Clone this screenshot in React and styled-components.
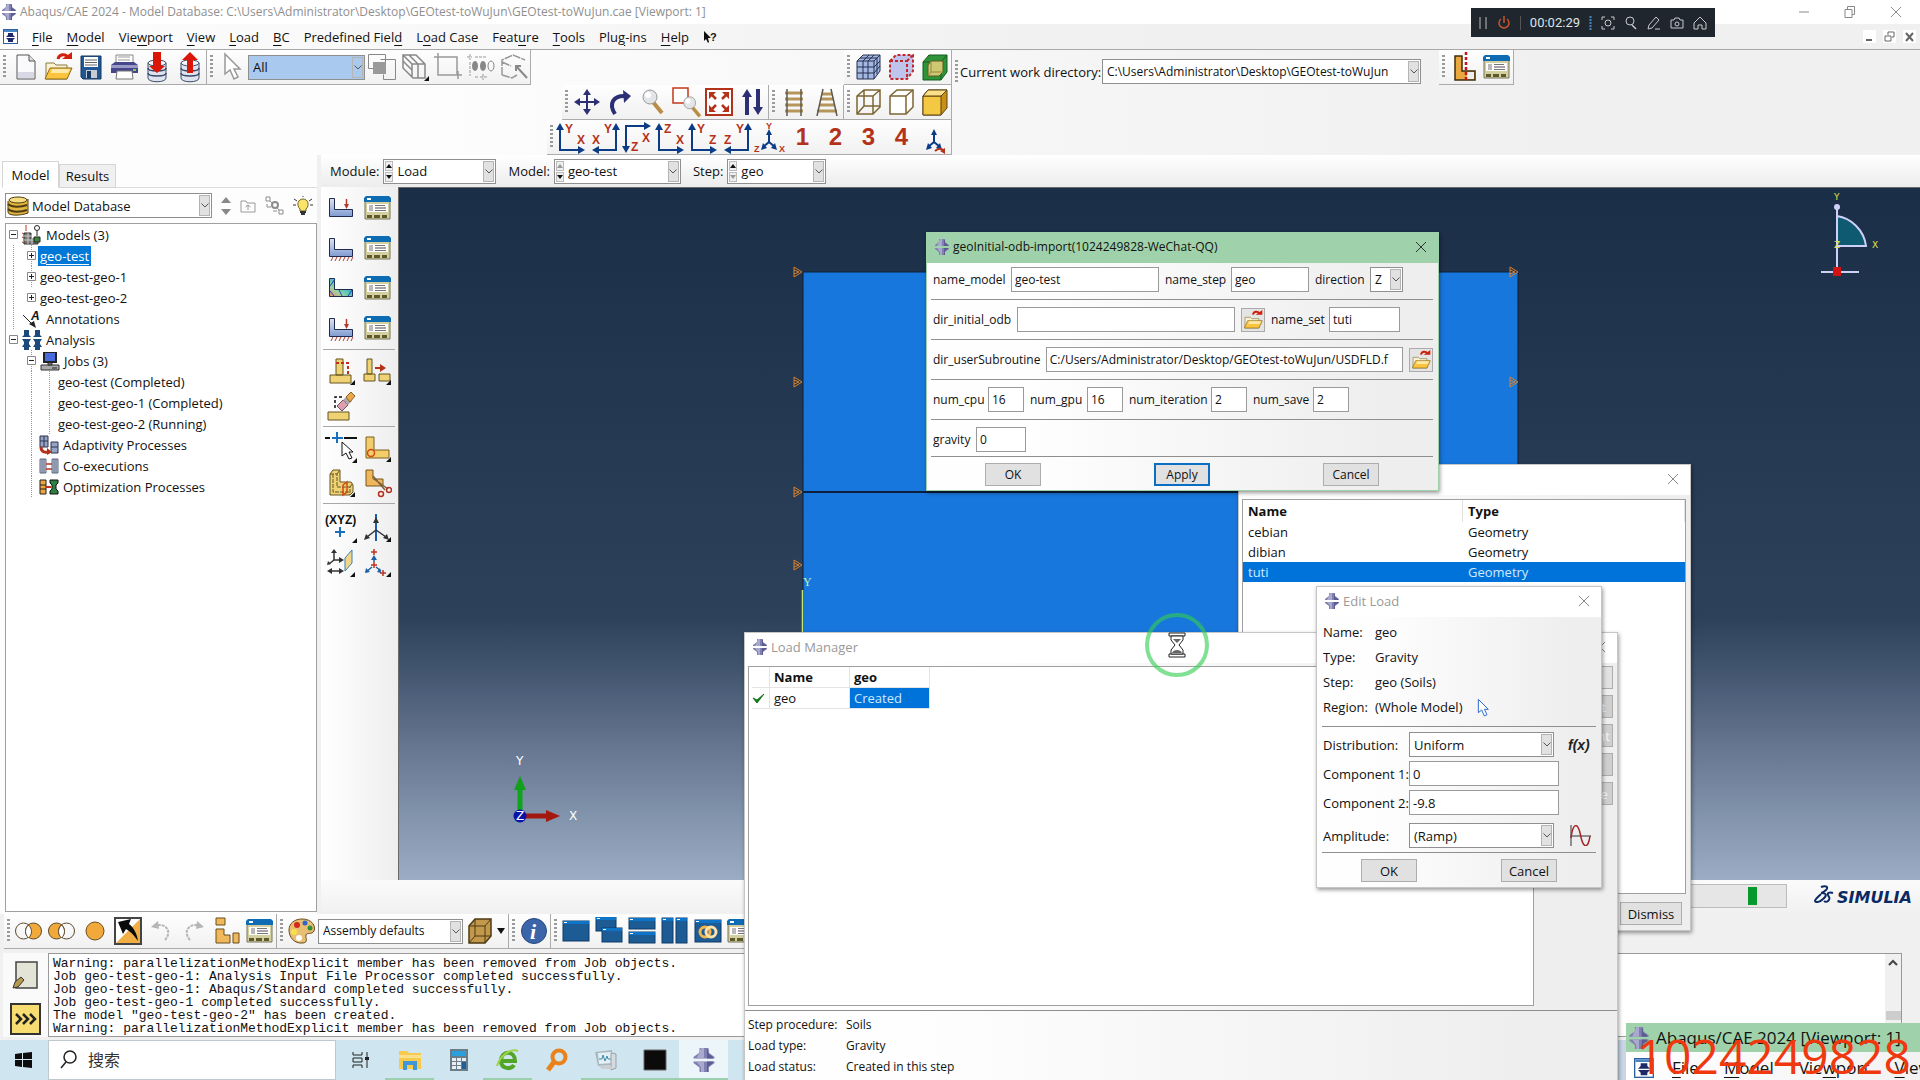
import React from 'react'
import styled, { createGlobalStyle } from 'styled-components';

const GlobalStyle = createGlobalStyle`
  * { box-sizing: border-box; }
  body {
    margin: 0;
    background: #f0f0f0;
    color: #111;
    font-family: "Open Sans", "Noto Sans", "Noto Sans CJK SC", sans-serif;
    font-size: 13px;
    line-height: 20px;
  }
  button, input, select { font: inherit; color: inherit; margin: 0; }
  svg { display: block; flex: none; }
`;

/* ---------- layout ---------- */

const Desktop = styled.div`
  position: relative;
  display: flex;
  flex-direction: column;
  height: 100vh;
  overflow: hidden;
`;

const TitleBar = styled.header`
  display: flex;
  align-items: center;
  gap: 3px;
  height: 24px;
  padding: 0 18px 0 1px;
  background: #fff;
  color: #8f8f8f;
  font-size: 12px;
`;

const WindowButtons = styled.div`
  display: flex;
  gap: ${(p) => p.$gap}px;
  margin-left: auto;
`;

const BareButton = styled.button`
  display: flex;
  align-items: center;
  justify-content: center;
  padding: 0;
  border: 0;
  background: ${(p) => p.$bg || 'transparent'};
  color: inherit;
`;

const MenuBar = styled.nav`
  display: flex;
  align-items: center;
  gap: 14px;
  height: 26px;
  padding: 0 4px 0 3px;
  background: linear-gradient(90deg, #fdfdfd, #f0f0f0 60%);
  border-bottom: 1px solid #a8a8a8;
`;

const MenuItem = styled.button`
  padding: 0;
  border: 0;
  background: none;
  white-space: nowrap;
  u { text-underline-offset: 3px; }
`;

const Dock = styled.div`
  display: flex;
  align-items: flex-start;
  background: linear-gradient(90deg, #fdfdfd 20%, #f0f0f0 80%);
`;

const DockColumn = styled.div`
  display: flex;
  flex-direction: column;
  width: 952px;
`;

const DockRow = styled.div`
  display: flex;
  justify-content: ${(p) => (p.$spread ? 'space-between' : 'flex-end')};
`;

const DockGroups = styled.div`
  display: flex;
`;

const Toolbar = styled.div`
  display: flex;
  align-items: center;
  height: 35px;
  border: solid #ababab;
  border-width: 0 1px 1px 0;
  background: linear-gradient(#fefefe, #f1f1f1);
`;

const Grip = styled.div`
  width: 3px;
  height: 24px;
  margin: 0 2px 0 3px;
  background: repeating-linear-gradient(#9a9a9a 0 2px, transparent 2px 4px);
`;

const ToolButton = styled.button`
  display: flex;
  align-items: center;
  justify-content: center;
  width: 33px;
  height: 33px;
  padding: 0;
  border: 0;
  background: none;
`;

const WorkDir = styled.div`
  display: flex;
  align-items: center;
  height: 35px;
  margin: 4px 18px 0 0;
  label { width: 142px; white-space: nowrap; }
`;

const Workspace = styled.main`
  display: flex;
  flex: 1;
  min-height: 0;
`;

const LeftPanel = styled.aside`
  display: flex;
  flex-direction: column;
  width: 317px;
  padding: 6px 0 2px 2px;
  background: #fdfdfd;
`;

const TabStrip = styled.div`
  display: flex;
  align-items: flex-end;
  border-bottom: 1px solid #dcdcdc;
`;

const Tab = styled.button`
  height: ${(p) => (p.$active ? 27 : 24)}px;
  width: 57px;
  margin-bottom: -1px;
  padding: 0;
  border: 1px solid #d5d5d5;
  border-bottom-color: ${(p) => (p.$active ? '#fff' : '#d5d5d5')};
  background: ${(p) => (p.$active ? '#fff' : '#f0f0f0')};
`;

const TreeTools = styled.div`
  display: flex;
  align-items: center;
  gap: 9px;
  padding: 5px 0 5px 3px;
`;

const Tree = styled.ul`
  flex: 1;
  margin: 0 0 0 3px;
  padding: 0;
  border: 1px solid #a0a0a0;
  background: #fff;
  list-style: none;
`;

const guides = (list) =>
  list.map((x) =>
    `repeating-linear-gradient(#999 0 1px, transparent 1px 2px) ${x}px 0 / 1px 100% no-repeat`
  ).join(', ') || 'none';

const TreeRow = styled.li`
  display: flex;
  align-items: center;
  height: 21px;
  gap: 4px;
  padding-left: ${(p) => p.$indent}px;
  background: ${(p) => guides(p.$guides)};
`;

const Toggle = styled.button`
  display: flex;
  padding: 0;
  border: 0;
  background: #fff;
`;

const TreeLabel = styled.span`
  padding: 0 2px;
  margin-left: -2px;
  background: ${(p) => (p.$selected ? '#0078d7' : 'none')};
  color: ${(p) => (p.$selected ? '#fff' : 'inherit')};
  text-decoration: ${(p) => (p.$selected ? 'underline' : 'none')};
  text-underline-offset: 3px;
`;

const CanvasColumn = styled.section`
  display: flex;
  flex: 1;
  flex-direction: column;
  min-width: 0;
  margin-left: 4px;
`;

const ContextBar = styled.div`
  display: flex;
  align-items: center;
  height: 32px;
  padding-left: 9px;
  background: linear-gradient(#fff, #ececec);
`;

const ContextField = styled.div`
  display: flex;
  align-items: center;
  gap: 4px;
  margin-right: 12px;
`;

const CanvasRow = styled.div`
  display: flex;
  flex: 1;
  min-height: 0;
`;

const Toolbox = styled.div`
  width: 77px;
  padding: 0 3px 0 2px;
  background: linear-gradient(90deg, #fff, #eee);
`;

const ToolSection = styled.div`
  display: grid;
  grid-template-columns: 36px 36px;
  grid-auto-rows: ${(p) => p.$row}px;
  padding: ${(p) => p.$pad}px 0;
  border-bottom: ${(p) => (p.$last ? 0 : 1)}px solid #a8a8a8;
  place-items: center;
`;

const Viewport = styled.div`
  flex: 1;
  background: linear-gradient(#1a2e47 0%, #2d415b 62%, #435670 70%, #64738e 80%, #8091aa 90%, #9badc4 100%);
  border: solid #6a6a6a;
  border-width: 1px 0 0 1px;
`;

const PromptArea = styled.div`
  display: flex;
  align-items: flex-start;
  justify-content: flex-end;
  height: 34px;
  padding: 4px 4px 0 0;
  background: linear-gradient(#fbfbfb, #f0f0f0);
`;

const ProgressTrack = styled.div`
  display: flex;
  justify-content: flex-end;
  width: 240px;
  height: 24px;
  margin-right: 25px;
  padding: 2px 29px 2px 0;
  border: 1px solid #bcbcbc;
  background: #e6e6e6;
`;

const ProgressBlock = styled.div`
  width: 9px;
  background: #069a2e;
`;

const BottomBar = styled.div`
  display: flex;
  padding: 0 4px 4px;
  background: #f0f0f0;
`;

const MessageArea = styled.div`
  display: flex;
  height: 87px;
  padding: 0 18px 3px 3px;
`;

const SideTabs = styled.div`
  display: flex;
  flex-direction: column;
  width: 45px;
  justify-content: space-between;
  align-items: center;
  padding: 6px 0 2px;
  background: #fafafa;
`;

const Log = styled.div`
  flex: 1;
  padding: 3px 4px 0;
  border: 1px solid #999;
  border-right: 0;
  background: #fff;
  font-family: "Liberation Mono", monospace;
  font-size: 13px;
  line-height: 13px;
  white-space: pre;
`;

const ScrollBar = styled.div`
  display: flex;
  flex-direction: column;
  justify-content: space-between;
  align-items: center;
  width: 17px;
  padding: 5px 0 16px;
  border: 1px solid #999;
  border-left: 0;
  background: #f0f0f0;
`;

const ScrollThumb = styled.div`
  width: 15px;
  height: 9px;
  background: #cdcdcd;
`;

const Taskbar = styled.footer`
  display: flex;
  height: 40px;
  background: linear-gradient(90deg, #cfe5ef 60%, #c9d5e5 85%);
`;

const StartButton = styled.button`
  display: flex;
  align-items: center;
  justify-content: center;
  width: 48px;
  padding: 0;
  border: 0;
  background: none;
`;

const SearchBox = styled.label`
  display: flex;
  align-items: center;
  gap: 11px;
  width: 288px;
  padding-left: 11px;
  border: 1px solid #bfc8cc;
  background: #fff;
  input {
    width: 200px;
    border: 0;
    padding: 0;
    outline: 0;
    font-size: 16px;
    &::placeholder { color: #333; opacity: 1; }
  }
`;

const TaskButton = styled.button`
  display: flex;
  align-items: center;
  justify-content: center;
  width: 49px;
  padding: 0;
  border: 0;
  background: ${(p) => (p.$active ? '#ecf6fa' : 'none')};
  box-shadow: ${(p) => (p.$running ? 'inset 0 -2px #9ccfae' : 'none')};
`;

/* ---------- form parts ---------- */

const ComboBox = styled.div`
  display: flex;
  flex: none;
  align-items: center;
  width: ${(p) => p.$w}px;
  height: 25px;
  padding: 1px;
  border: 1px solid #8f8f8f;
  background: ${(p) => p.$bg || '#fff'};
  font-size: ${(p) => p.$font || 13}px;
  select {
    flex: 1;
    min-width: 0;
    height: 100%;
    padding: 0 0 0 3px;
    border: 0;
    outline: 0;
    appearance: none;
    background: transparent;
  }
`;

const ComboArrow = styled.span`
  display: flex;
  align-items: center;
  justify-content: center;
  width: 11px;
  height: 100%;
  border: 1px solid #b4b4b4;
  background: ${(p) => (p.$flat ? 'transparent' : '#e1e1e1')};
`;

const Spinner = styled.span`
  display: flex;
  flex-direction: column;
  gap: 1px;
  padding-right: 1px;
`;

const SpinButton = styled.button`
  display: flex;
  align-items: center;
  justify-content: center;
  width: 8px;
  height: 10px;
  padding: 0;
  border: 1px solid #bbb;
  background: #eee;
`;

const TextInput = styled.input`
  width: ${(p) => p.$w}px;
  height: 25px;
  padding: 0 3px;
  border: 1px solid #9a9a9a;
  outline: 0;
  background: #fff;
`;

const PushButton = styled.button`
  width: ${(p) => p.$w || 56}px;
  height: 23px;
  padding: 0;
  border: ${(p) => (p.$focus ? '2px solid #0a6fc2' : '1px solid #adadad')};
  background: ${(p) => (p.$off ? '#cfcfcf' : '#e1e1e1')};
  color: ${(p) => (p.$off ? '#f5f5f5' : 'inherit')};
  line-height: 18px;
  white-space: nowrap;
`;

const Rule = styled.hr`
  margin: 0;
  border: 0;
  border-top: 1px solid #8f8f8f;
`;

/* ---------- dialogs ---------- */

const Dialog = styled.section`
  position: absolute;
  left: ${(p) => p.$x}px;
  top: ${(p) => p.$y}px;
  width: ${(p) => p.$w}px;
  border: 1px solid ${(p) => p.$edge || '#c6c6c6'};
  background: linear-gradient(90deg, #fefefe 20%, #eee 90%);
  box-shadow: 1px 2px 4px rgba(0, 0, 0, 0.4);
  font-size: ${(p) => p.$font || 13}px;
`;

const DialogTitle = styled.div`
  display: flex;
  align-items: center;
  gap: 3px;
  height: 30px;
  padding: 0 11px 2px 7px;
  background: ${(p) => (p.$active ? '#9fd2aa' : '#fff')};
  color: ${(p) => (p.$active ? '#111' : '#999')};
  button { margin-left: auto; }
`;

const GeoBody = styled.form`
  padding: 4px 5px 4px 4px;
`;

const GeoRow = styled.div`
  display: flex;
  align-items: center;
  height: 25px;
  margin: ${(p) => (p.$first ? 0 : 7)}px 0 ${(p) => (p.$last ? 4 : 7)}px 2px;
`;

const GeoLabel = styled.label`
  width: ${(p) => p.$w}px;
  white-space: nowrap;
`;

const Spacer = styled.span`
  width: ${(p) => p.$w}px;
`;

const FileButton = styled.button`
  display: flex;
  align-items: center;
  justify-content: center;
  width: 24px;
  height: 24px;
  padding: 0;
  border: 1px solid #aaa;
  background: #e4e4e4;
`;

const ButtonRow = styled.div`
  display: flex;
  justify-content: ${(p) => (p.$end ? 'flex-end' : 'space-between')};
  padding: ${(p) => (p.$end ? 8 : 6)}px ${(p) => p.$side}px 0;
`;

const SetBody = styled.div`
  padding: 4px 4px 5px 3px;
`;

const ListFrame = styled.div`
  height: ${(p) => p.$h}px;
  border: 1px solid #a0a0a0;
  background: #fff;
`;

const SetTable = styled.table`
  width: 100%;
  border-spacing: 0;
  table-layout: fixed;
  text-align: left;
  th, td { height: 20px; padding: 0 5px; }
  thead th { height: 22px; border-right: 1px solid #e2e2e2; }
  tbody tr:last-child { background: #0073db; color: #cfeaff; }
  col:first-child { width: 220px; }
`;

const LoadBody = styled.div`
  display: flex;
  padding: 3px 4px 4px 3px;
  ${ListFrame} { flex: 1; margin-right: 5px; }
`;

const LoadTable = styled.table`
  margin: 0 0 0 3px;
  border-spacing: 0;
  text-align: left;
  th, td { height: 20px; padding: 0 4px; border: solid #e4e4e4; border-width: 0 1px 1px 0; }
  th:first-child, td:first-child { width: 18px; padding: 0; }
  th, td { width: 80px; }
  td:last-child { background: #0073db; color: #cfeaff; }
`;

const SideButtons = styled.div`
  display: flex;
  flex-direction: column;
  gap: 6px;
`;

const LoadInfo = styled.dl`
  display: grid;
  grid-template-columns: 98px 1fr;
  margin: 3px 3px 4px;
  font-size: 12px;
  line-height: 21px;
  dd { margin: 0; }
`;

const EditBody = styled.form`
  padding: 3px 5px 5px;
`;

const Facts = styled.dl`
  display: grid;
  grid-template-columns: 52px 1fr;
  margin: 0 1px 6px;
  line-height: 25px;
  dd { display: flex; align-items: center; gap: 14px; margin: 0; }
`;

const EditField = styled.div`
  display: flex;
  align-items: center;
  height: 25px;
  margin: ${(p) => p.$gap}px 0 4px 1px;
  label { width: 86px; white-space: nowrap; }
`;

const FieldButton = styled(BareButton)`
  width: 24px;
  margin-left: 14px;
`;

const Preview = styled.section`
  position: absolute;
  right: 0;
  bottom: 0;
  width: 294px;
  overflow: hidden;
  background: linear-gradient(90deg, #fff, #f2f2f2);
  font-size: 17px;
  white-space: nowrap;
`;

const PreviewTitle = styled.div`
  display: flex;
  align-items: center;
  gap: 6px;
  height: 29px;
  padding-left: 2px;
  background: #9fd2aa;
`;

const PreviewMenu = styled.div`
  display: flex;
  align-items: center;
  gap: 25px;
  height: 28px;
  padding: 4px 0 0 8px;
  svg { margin-right: -7px; }
  u { text-underline-offset: 3px; }
`;

const Stamp = styled.div`
  position: absolute;
  right: 9px;
  bottom: 0;
  color: #f0380f;
  font-size: 48px;
  line-height: 48px;
`;

const ClickRing = styled.div`
  position: absolute;
  left: 1145px;
  top: 613px;
  display: flex;
  align-items: center;
  justify-content: center;
  width: 64px;
  height: 64px;
  border: 4px solid rgba(50, 205, 80, 0.62);
  border-radius: 50%;
`;

const Recorder = styled.div`
  position: absolute;
  right: 205px;
  top: 8px;
  display: flex;
  align-items: center;
  gap: 9px;
  height: 29px;
  padding: 0 8px 0 7px;
  background: #20262e;
  color: #dfe3e6;
  font-family: Roboto, sans-serif;
  font-size: 13px;
`;

const Digit = styled.span`
  color: #b5321a;
  font: bold 24px "Liberation Sans", sans-serif;
`;

/* ---------- drawings ---------- */

const Svg = ({ s = 28, w, h, children }) => (
  <svg width={w || s} height={h || s} viewBox={`0 0 ${w || s} ${h || s}`} fill="none" aria-hidden="true">{children}</svg>
);

const AbaqusMark = ({ size = 16 }) => (
  <svg width={size} height={size} viewBox="0 0 16 16" aria-hidden="true">
    <path d="M5 0h6v3l4 3v1H1V6l4-3zM1 9h14v1l-4 3v3H5v-3l-4-3z" fill="#7f7fb0" />
    <path d="M6 0h2v7H3zM3 9h5v7H6v-3z" fill="#a9a9cd" />
    <path d="M10 1h1v3l3 2v1h-4zM10 9h4v1l-3 2v4h-1z" fill="#5c5c92" />
  </svg>
);

const DocMark = ({ size = 15 }) => (
  <svg width={size} height={size} viewBox="0 0 15 15" aria-hidden="true">
    <rect x=".5" y=".5" width="14" height="14" fill="#fff" stroke="#2e5f9e" />
    <path d="M1 1h13v2H1z" fill="#4b86c4" />
    <path d="M5 4h5v2l2 2H3l2-2zM3 9h9l-2 2v2H5v-2z" fill="#1c2a6a" />
  </svg>
);

const Cross = ({ c = '#8a8a8a' }) => <Svg s={12}><path d="M1 1l10 10M11 1L1 11" stroke={c} /></Svg>;
const Chevron = ({ c = '#555' }) => <Svg w={8} h={5}><path d="M.5.5L4 4 7.500.5" stroke={c} /></Svg>;
const Corner = () => <path d="M28 23v5h-5z" fill="#111" />;

const NewIcon = () => <Svg s={30}><path d="M7 3h12l6 6v18H7z" fill="#fafafc" stroke="#555" /><path d="M19 3v6h6" fill="#ddd" stroke="#555" /><path d="M8 20h16v6H8z" fill="#d9d9e6" /></Svg>;
const OpenIcon = ({ s = 30 }) => (
  <svg width={s} height={s} viewBox="0 0 30 30" fill="none" aria-hidden="true">
    <path d="M3 27V11h8l2 2h11v14z" fill="#fbf2d2" stroke="#8a7a45" />
    <path d="M2 27l5-11h22l-5 11z" fill="#fbc43c" stroke="#8a6a20" />
    <path d="M9 17h18l-2 4H8z" fill="#fde9a8" />
    <path d="M15 7c1-5 8-6 10-1" stroke="#d0210c" strokeWidth="3" /><path d="M19 7h10V0z" fill="#d0210c" />
  </svg>
);
const SaveIcon = () => <Svg><path d="M4 3h20v23H6l-2-2z" fill="#1f5796" stroke="#16365f" /><path d="M7 4h14v10H7z" fill="#fff" /><path d="M8 7h12M8 9.500h12M8 12h12" stroke="#666" /><path d="M9 17h11v8H9z" fill="#c7ccd2" /><path d="M10 18h4v7h-4z" fill="#173a66" /></Svg>;
const PrintIcon = () => <Svg s={30}><path d="M7 3h17v10H7z" fill="#fff" stroke="#888" /><path d="M9 5h12M9 8h12" stroke="#999" /><path d="M2 13l4-3h19l4 3v8H2z" fill="#46468a" /><path d="M2 13h27v3H2z" fill="#9a9ac9" /><path d="M8 19h15l1 8H7z" fill="#fff" stroke="#777" /><path d="M24 18h3" stroke="#7fd24e" strokeWidth="2" /></Svg>;
const DbIcon = ({ up }) => (
  <Svg s={32}>
    <path d="M7 12v15c0 5 18 5 18 0V12" fill="#dde4f0" stroke="#3c4a66" />
    <ellipse cx="16" cy="12" rx="9" ry="3" fill="#f5f7fb" stroke="#3c4a66" />
    <path d="M7 17c0 4 18 4 18 0M7 22c0 4 18 4 18 0" stroke="#3c4a66" strokeWidth="1.500" />
    <path d={up ? 'M13 22V9H8l8-8 8 8h-5v13z' : 'M12 1h8v14h4l-8 7-8-7h4z'} fill="#d91608" />
  </Svg>
);
const ArrowCursor = ({ c = '#999', w = 20, h = 30 }) => (
  <svg width={w} height={h} viewBox="0 0 20 30" fill="#fff" stroke={c} strokeWidth="1.500" aria-hidden="true"><path d="M3 2v20l5-4 4 9 4-2-4-8h6z" /></svg>
);
const OverlapIcon = () => <Svg s={30}><path d="M1.500 2.500h17v14h-17z" stroke="#888" /><path d="M13.500 7.500h15v20h-12v-5" stroke="#888" /><path d="M6 10h13v12H6z" fill="#999" /></Svg>;
const GreyCube = () => <Svg><path d="M2 2h13l9 9v14H12L2 15zM2 2l9 9h13M11 11v13M2 8l9 9M8 2l9 9v14" stroke="#888" strokeWidth="1.500" /><Corner /></Svg>;
const GreyFrame = () => <Svg><path d="M4 4h19v18H4zM0 4h5M4 0v8M21 22h7M24 18v8" stroke="#999" strokeWidth="1.500" /></Svg>;
const GreyDots = () => <Svg><path d="M0 4h5M3 1v6M8 4h12M3 9v14M8 24h4M16 21v6M13 24h8" stroke="#999" strokeDasharray="3 1" /><ellipse cx="8" cy="13" rx="3" ry="5" fill="#888" /><ellipse cx="16" cy="13" rx="3" ry="5" fill="#888" /><ellipse cx="24" cy="13" rx="3" ry="5" stroke="#888" /></Svg>;
const GreyShell = () => <Svg><path d="M2 22V7l11-5 12 5M2 9l9 4M2 22l10 3 5-3" stroke="#999" strokeWidth="1.500" strokeDasharray="8 1" /><path d="M27 25L17 14M16 18v-5h5" stroke="#888" strokeWidth="2" /></Svg>;

const MeshCube = () => <Svg><path d="M2 8l6-6h17v16l-6 8H2z" fill="#a5b7e3" stroke="#22304f" /><path d="M2 8h17v18M19 8l6-6M8 8v18M13 8v18M2 14h17l6-6M2 20h17l6-7M5 5h17v16M8 8l6-6M13 8l6-6" stroke="#22304f" /></Svg>;
const SeedCube = () => <Svg><path d="M2 8l6-6h17v16l-6 8H2z" fill="#bfc4ec" stroke="#c2272b" strokeWidth="2" strokeDasharray="3 2" /><path d="M2 8h17v18M19 8l6-6" stroke="#c2272b" strokeWidth="2" strokeDasharray="3 2" /></Svg>;
const NestedCube = () => <Svg><path d="M2 9l6-7h18v17l-6 8H2z" fill="#2f9439" stroke="#175a20" /><path d="M2 9h18v18M20 9l6-7" stroke="#175a20" /><path d="M7 12l3-4h12v11l-4 4H7z" fill="#cfc873" stroke="#5b5a20" /><path d="M10 8v11h12M10 19l-3 4" stroke="#8c8a3c" /></Svg>;
const MoveIcon = () => <Svg><path d="M14 4v20M4 14h20" stroke="#2c2f74" strokeWidth="2" /><path d="M14 1l4 6h-8zM14 27l4-6h-8zM1 14l6-4v8zM27 14l-6-4v8z" fill="#2c2f74" /></Svg>;
const RotateIcon = () => <Svg><path d="M9 26C2 15 8 8 18 8" stroke="#2c2f74" strokeWidth="4" /><path d="M17 2l8 6-7 7z" fill="#2c2f74" /></Svg>;
const Lens = ({ x = 0, y = 0 }) => <g transform={`translate(${x} ${y})`}><path d="M12 13l9 11" stroke="#b98d46" strokeWidth="4" /><circle cx="9" cy="8" r="7" fill="#e4e5e8" stroke="#999" /><circle cx="7" cy="6" r="3" fill="#fff" /></g>;
const ZoomIcon = () => <Svg><Lens x={2} y={1} /></Svg>;
const BoxZoomIcon = () => <Svg s={32}><path d="M3 2h15v15H3z" fill="#fff" stroke="#c3361d" strokeWidth="1.500" /><g transform="translate(12 10) scale(.85)"><Lens /></g></Svg>;
const FitIcon = () => <Svg><path d="M1 1h26v26H1z" fill="#fff" stroke="#b5321a" strokeWidth="2" /><path d="M4 4h7L4 11zM24 4h-7l7 7zM4 24h7l-7-7zM24 24h-7l7-7z" fill="#b5321a" /><path d="M5 5l6 6M23 5l-6 6M5 23l6-6M23 23l-6-6" stroke="#b5321a" strokeWidth="2.500" /></Svg>;
const UpDownIcon = () => <Svg><path d="M9 27V7M20 1v19" stroke="#2c2f74" strokeWidth="4" /><path d="M9 1l5 8H4zM20 27l5-8H15z" fill="#2c2f74" /></Svg>;
const LadderIcon = ({ slant }) => <Svg><path d={slant ? 'M9 6h10M8 11h12M6 17h16M4 23h20' : 'M5 5h18M5 11h18M5 17h18M5 23h18'} stroke="#b6955a" strokeWidth="3" /><path d={slant ? 'M10 1L4 28M18 1l6 27' : 'M7 1v27M21 1v27'} stroke="#5d5850" strokeWidth="1.500" /></Svg>;
const WireCube = () => <Svg><path d="M2 8l7-6h16v17l-7 7H2zM2 8h16v18M18 8l7-6M9 2v16h16M9 18l-7 8" stroke="#7c6633" strokeWidth="1.500" /></Svg>;
const HiddenCube = () => <Svg><path d="M2 8l7-6h16v17l-7 7H2z" fill="#fff" stroke="#7c6633" strokeWidth="1.500" /><path d="M2 8h16v18M18 8l7-6" stroke="#7c6633" strokeWidth="1.500" /></Svg>;
const SolidCube = () => <Svg><path d="M2 8l5-6h19v18l-6 7H2z" fill="#c98f16" stroke="#5c4310" /><path d="M2 8h18v19H2z" fill="#f5c843" stroke="#5c4310" /><path d="M2 8l5-6h19l-6 6z" fill="#fbe08a" stroke="#5c4310" /></Svg>;

const Letter = ({ x, y, children, c = '#b5321a', size = 12 }) => (
  <text x={x} y={y} fill={c} fontSize={size} fontWeight="bold" fontFamily="Liberation Sans, sans-serif">{children}</text>
);
const AxisIcon = ({ flip, v, h }) => (
  <Svg s={33}>
    <path d={flip ? 'M28 7v22H9' : 'M5 7v22h19'} stroke="#0c3c86" strokeWidth="2" />
    <path d={flip ? 'M28 2l4 7h-8zM4 29l7-4v8z' : 'M5 2l4 7H1zM30 29l-7-4v8z'} fill="#0c3c86" />
    <Letter x={flip ? 16 : 10} y={12}>{v}</Letter><Letter x={flip ? 4 : 22} y={23}>{h}</Letter>
  </Svg>
);
const AxisDown = () => <Svg s={33}><path d="M5 26V5h20" stroke="#0c3c86" strokeWidth="2" /><path d="M5 32l4-7H1zM30 5l-7-4v8z" fill="#0c3c86" /><Letter x={21} y={21}>X</Letter><Letter x={10} y={30}>Z</Letter></Svg>;
const IsoIcon = ({ custom }) => (
  <Svg s={33}>
    <path d="M16 10v11l-6 5M16 21l6 5" stroke="#0c3c86" strokeWidth="2" />
    <path d="M16 8l3 6h-6zM8 29l2-7 4 5zM24 29l-2-7-4 5z" fill="#0c3c86" />
    {custom
      ? <><path d="M17 30c3-3 7-3 9 0" stroke="#b5321a" strokeWidth="2" /><path d="M27 33v-6l-5 3z" fill="#b5321a" /></>
      : <><Letter x={13} y={8} size={9}>Y</Letter><Letter x={1} y={31} size={9}>Z</Letter><Letter x={26} y={31} size={9}>X</Letter></>}
  </Svg>
);
const PartIcon = () => <Svg s={30}><path d="M6 4h7v15h13v9H6z" fill="#e8a83e" stroke="#3c2c10" strokeWidth="1.500" /><path d="M18 20h7v7h-7z" fill="#eee" /><path d="M17 0v30" stroke="#c2161a" strokeWidth="2.500" strokeDasharray="3 2" /></Svg>;
const ManagerIcon = ({ w = 27 }) => (
  <svg width={w} height={w - 3} viewBox="0 0 27 24" aria-hidden="true">
    <path d="M1 2l1-1h23l1 1v21H1z" fill="#d3cf9f" stroke="#77745a" />
    <path d="M0 2l2-2h23l2 2v4H0z" fill="#0e6cb5" /><path d="M3 2h4v2H3z" fill="#fff" />
    <path d="M3 8h21v8H3z" fill="#fdfdfd" /><path d="M5 10h4M5 12h4M5 14h4M11 9.500h10M11 14.500h11" stroke="#777" /><path d="M11 11h11v2H11z" fill="#a9a2aa" />
    <path d="M3 19h5v3H3zM10 19h6v3h-6zM18 19h5v3h-5z" fill="#5f5a2b" />
  </svg>
);
const LoadIcon = ({ arrow, hatch, field }) => (
  <Svg>
    <defs>
      <linearGradient id="steel" x1="0" y1="0" x2="0" y2="1"><stop offset="0" stopColor="#dfe2f2" /><stop offset="1" stopColor="#7f9bd2" /></linearGradient>
      <linearGradient id="rainbow" x1="0" y1="1" x2="1" y2="0"><stop offset="0" stopColor="#e88d6a" /><stop offset=".3" stopColor="#9bd3a0" /><stop offset=".6" stopColor="#39c0c4" /><stop offset="1" stopColor="#3354c8" /></linearGradient>
    </defs>
    <path d="M2.500 4.500h5v11h18v7h-23z" fill={field ? 'url(#rainbow)' : 'url(#steel)'} stroke="#202a4e" />
    {arrow && <><path d="M19.500 5v8" stroke="#b93a2d" strokeWidth="1.500" /><path d="M17 10h5l-2.500 5z" fill="#b93a2d" /></>}
    {hatch && <path d="M6 23l-2 4M10 23l-2 4M14 23l-2 4M18 23l-2 4M22 23l-2 4M26 23l-2 4" stroke="#b93a2d" />}
    {field && <path d="M3 12l5-7M3 17l4 5M12 16l3 6M21 22l4-6" stroke="#2c3cc0" />}
  </Svg>
);
const yellow = { fill: '#efd274', stroke: '#655421' };
const TeeIcon = () => <Svg><path d="M9 2h7v16H9zM3 18h21v8H3z" {...yellow} /><path d="M9 6h12v12" stroke="#c2301c" strokeWidth="2" strokeDasharray="3 2" /><Corner /></Svg>;
const SplitIcon = () => <Svg><path d="M4 2h5v15H4zM1 17h11v7H1zM16 17h11v7H16z" {...yellow} /><path d="M12 11h6" stroke="#b5321a" strokeWidth="2" /><path d="M17 7l6 4-6 4z" fill="#b5321a" /><Corner /></Svg>;
const EraseIcon = () => <Svg s={30}><path d="M2 21h21v8H2z" {...yellow} /><path d="M16 6h-7v13" stroke="#111" strokeWidth="1.500" strokeDasharray="3 2" /><path d="M11 15l6-6 5 5-6 6z" fill="#dc9fb0" stroke="#764f5c" /><path d="M17 9l4-4 5 5-4 4z" fill="#a9a9a9" /><path d="M20 6l5-5 4 4-5 6z" fill="#eba84a" stroke="#8c642a" /></Svg>;
const PickEdge = () => <Svg s={32}><path d="M0 6h5M19 6h13" stroke="#111" strokeWidth="2" /><path d="M12 0v11M7 6h11" stroke="#1a6fbd" strokeWidth="2" /><path d="M17 10v14l4-3 3 6 3-1-3-6h4z" fill="#fff" stroke="#111" /><path d="M32 26v5h-5z" fill="#111" /></Svg>;
const PartitionL = () => <Svg><path d="M3 3h8v13h15v8H3z" fill="#f3cd6a" stroke="#7a5f22" /><circle cx="8" cy="19" r="3.500" stroke="#cf4a14" strokeWidth="1.500" /><Corner /></Svg>;
const PartitionSolid = () => <Svg><path d="M3 5l3-4h7v12h11l2 3v7l-3 3H3z" {...yellow} /><path d="M3 5h7v13h13v8M10 5l3-4M23 18l3-4M6 5v18h17" stroke="#655421" strokeDasharray="4 1" /><path d="M16 16l4-3v10l-4 3z" stroke="#cf4a14" strokeWidth="1.500" /><Corner /></Svg>;
const CutIcon = () => <Svg s={30}><path d="M4 2h7v9h10v7H4z" fill="#efb65b" stroke="#76571f" /><path d="M11 8l12 14M12 11l14 10" stroke="#7a6140" strokeWidth="1.500" /><circle cx="19" cy="26" r="2.500" stroke="#b3321f" strokeWidth="1.500" /><circle cx="27" cy="22" r="2.500" stroke="#b3321f" strokeWidth="1.500" /></Svg>;
const XyzIcon = () => <Svg s={32}><Letter x={0} y={12} c="#111" size={12}>(XYZ)</Letter><path d="M15 15v10M10 20h10" stroke="#1a6fbd" strokeWidth="2" /><path d="M32 26v5h-5z" fill="#111" /></Svg>;
const AxisTool = () => <Svg><path d="M13 0v27" stroke="#1a5fa8" strokeWidth="2" /><path d="M13 16L4 23M13 16l10 7" stroke="#333" strokeWidth="1.500" /><path d="M13 3l3 6h-6zM1 26l2-6 4 4zM26 26l-2-6-4 4z" fill="#333" /><Corner /></Svg>;
const PlaneTool = () => <Svg><path d="M7 3v8h8M7 11l-5 4M2 22h13" stroke="#333" strokeWidth="1.500" /><path d="M4 4l3-4 3 4zM12 8l5 3-5 3zM0 22l5-3v6zM17 22l-5-3v6zM0 16l1-4 3 3z" fill="#333" /><path d="M18 9l7-8v13l-7 8z" fill="#f2d78a" stroke="#3c7fb0" /><Corner /></Svg>;
const CsysTool = () => <Svg><path d="M11 0v6M8 3h6M11 13v6M8 16h6M20 21v6M17 24h6" stroke="#c2301c" strokeWidth="1.500" /><path d="M11 13V9M9 18l-6 5M13 18l5 4" stroke="#1a5fa8" strokeWidth="1.500" /><path d="M11 6l3 5H8zM2 24l1-5 4 4zM18 24l-1-5-3 4z" fill="#1a5fa8" /><Corner /></Svg>;

const DbStack = () => <Svg w={22} h={20}><path d="M1 5v11c0 4 12 4 20 1V3" fill="#e2b53e" stroke="#4d3c12" /><ellipse cx="11" cy="4" rx="9" ry="3" fill="#f6dc7e" stroke="#4d3c12" /><path d="M1 8c4 4 14 3 19 1M1 13c4 4 14 3 19 1" stroke="#4d3c12" strokeWidth="2" /></Svg>;
const SortArrows = () => <Svg w={10} h={20}><path d="M5 1l5 6H0zM5 19l5-6H0z" fill="#888" /></Svg>;
const FolderUp = () => <Svg w={16} h={16}><path d="M1 14V3h5l1 2h8v9zM8 12V7M5.500 9L8 7l2.500 2" stroke="#999" /></Svg>;
const LinkIcon = () => <Svg w={19} h={19}><path d="M1 1h4v4H1zM14 14h4v4h-4zM5 5l3 3M12 12l2 2M2 8v3h4M8 15h4" stroke="#8d8d8d" /><circle cx="10" cy="9" r="3" stroke="#8d8d8d" strokeWidth="2" /></Svg>;
const BulbIcon = () => <Svg s={20}><path d="M7 13c-4-4-2-10 3-10s7 6 3 10v2H7z" fill="#fbe268" stroke="#6d6427" /><path d="M7 16h6M8 18h4" stroke="#333" strokeWidth="2" /><path d="M1 3l3 2M19 3l-3 2M0 9h3M17 9h3M10 0v1" stroke="#333" /></Svg>;
const Box = ({ plus }) => <Svg s={9}><path d="M.5.5h8v8h-8z" fill="#fff" stroke="#888" /><path d={plus ? 'M2 4.500h5M4.500 2v5' : 'M2 4.500h5'} stroke="#222" /></Svg>;
const ModelsIcon = () => <Svg s={20}><path d="M2 8h7v6h7v5H2z" fill="#777" stroke="#333" /><path d="M2 11h8M2 15h12M6 8v11M10 13v6" stroke="#ccc" /><path d="M4 0v6M0 8l2 1M0 12l2 1M0 17l2 1" stroke="#c2301c" /><circle cx="15" cy="3" r="2.500" stroke="#222" /><path d="M15 6v5" stroke="#222" /><path d="M12 12h6v5h-6z" fill="#38863c" stroke="#222" /></Svg>;
const NoteIcon = () => <Svg s={20}><path d="M1 6l9 9" stroke="#222" /><path d="M7 15l5-3 2 7z" fill="#222" /><text x="9" y="11" fill="#111" fontSize="12" fontWeight="bold" fontStyle="italic" fontFamily="Liberation Sans, sans-serif">A</text></Svg>;
const AnalysisIcon = () => <Svg s={20}><path d="M2 0h5v5l2 2H0l2-2zM0 9h9l-2 3v2l2 3H7v3H2v-3H0l2-3v-2zM13 0h5v5l2 2h-9l2-2zM11 9h9l-2 3v2l2 3h-2v3h-5v-3h-2l2-3v-2z" fill="#1d4a7c" /></Svg>;
const JobIcon = () => <Svg s={20}><path d="M3 1h14v11H3z" fill="#222" /><path d="M5 2h10v8H5z" fill="#4a6ae0" /><path d="M8 12h4v2H8zM1 14h18v5H1z" fill="#aaa" stroke="#333" /><path d="M12 17h5" stroke="#222" /></Svg>;
const AdaptIcon = () => <Svg s={20}><path d="M1 1h8v11H1zM12 7h7v11h-7z" fill="#96a4c4" stroke="#2c3550" /><path d="M1 6h8M5 1v11M12 12h7" stroke="#2c3550" /><path d="M2 12c0 5 4 6 8 5" stroke="#b5321a" strokeWidth="3" /><path d="M8 13l5 4-5 3z" fill="#b5321a" /></Svg>;
const CoexecIcon = () => <Svg s={20}><path d="M1 3h6v14H1zM13 3h6v14h-6z" fill="#c1cbe0" stroke="#5d6880" /><path d="M3 3v14M5 3v14M15 3v14M17 3v14" stroke="#5d6880" /><path d="M7 8h6M7 13h6" stroke="#c2301c" strokeWidth="1.500" /></Svg>;
const OptIcon = () => <Svg s={20}><path d="M1 3h6v14H1z" fill="#eda73d" stroke="#222" /><path d="M1 8h6M1 12h6" stroke="#222" /><path d="M7 10h5" stroke="#c2301c" strokeWidth="2" /><path d="M11 3h8v3l-2 2v4l2 2v3h-8v-3l2-2V8l-2-2z" fill="#2c7f45" stroke="#111" /></Svg>;

const Disks = ({ a, b }) => <Svg s={30}><circle cx="9.500" cy="15" r="8" fill={a} stroke="#5b4a2c" /><circle cx="19.500" cy="15" r="8" fill={b} stroke="#5b4a2c" /><path d="M14.500 9c4 4 4 9 0 13-4-4-4-9 0-13z" fill="#fff" stroke="#5b4a2c" /></Svg>;
const Disk = () => <Svg><circle cx="14" cy="14" r="9" fill="#f2a93c" stroke="#6b4c1d" /></Svg>;
const ReplaceIcon = () => <Svg s={30}><path d="M2 2h26v26H2z" fill="#fff" /><path d="M28 2v26H2z" fill="#f0ae45" /><path d="M2 2h26v26H2z" stroke="#444" strokeWidth="2" /><path d="M5 6l13-3-2 5c5 4 8 10 9 17-4-6-8-10-12-12l-3 5z" fill="#0a0a0a" /></Svg>;
const UndoIcon = ({ redo }) => <Svg><path d={redo ? 'M10 23C2 14 10 5 20 9' : 'M18 23c8-9 0-18-10-14'} stroke="#b5b5b5" strokeWidth="2" strokeDasharray="3 1" /><path d={redo ? 'M17 4l7 6-8 2z' : 'M11 4L4 10l8 2z'} fill="#b5b5b5" /></Svg>;
const BlocksIcon = () => <Svg><path d="M3 1h9v7H3zM3 12h8v6h6v8H3zM20 16h6v10h-6z" fill="#f0b85a" stroke="#6b4c1d" /></Svg>;
const PaletteIcon = () => <Svg><path d="M14 2c10 0 14 7 12 12-2 4-7 1-8 4s3 7-3 8C6 27 1 20 1 13S7 2 14 2z" fill="#e8be72" stroke="#6b4c1d" /><circle cx="9" cy="8" r="3" fill="#d6281c" /><circle cx="17" cy="6" r="2.500" fill="#3066c9" /><circle cx="22" cy="11" r="2.500" fill="#2f8f3c" /><circle cx="6" cy="15" r="3" fill="#f6e04b" /><circle cx="11" cy="21" r="3" fill="#fff" /></Svg>;
const BrownCube = () => <Svg><path d="M3 9l6-7h16v17l-6 7H3z" fill="#c2984c" stroke="#4d3a14" strokeWidth="1.500" /><path d="M3 9h16v17M19 9l6-7M9 2v17h16M9 19l-6 7" stroke="#4d3a14" /></Svg>;
const InfoIcon = () => <Svg><circle cx="14" cy="14" r="12.500" fill="#3c64a8" stroke="#24467f" /><text x="10" y="22" fill="#fff" fontSize="22" fontStyle="italic" fontWeight="bold" fontFamily="Liberation Serif, serif">i</text></Svg>;
const Pane = ({ x, y, w, h }) => <><rect x={x} y={y} width={w} height={h} fill="#1d5b95" stroke="#0e3a66" /><path d={`M${x} ${y}h${w}v3H${x}z`} fill="#0d74c8" /><path d={`M${x + 1} ${y + 1.500}h3`} stroke="#fff" /></>;
const PanesIcon = ({ panes }) => <Svg>{panes.map((p, i) => <Pane key={i} x={p[0]} y={p[1]} w={p[2]} h={p[3]} />)}</Svg>;
const LinkedPane = () => <Svg><Pane x={1} y={3} w={26} h={22} /><circle cx="11" cy="15" r="5" stroke="#f4b64a" strokeWidth="3" /><circle cx="17" cy="15" r="5" stroke="#fde2a6" strokeWidth="3" /></Svg>;

const SineIcon = () => <Svg s={21}><path d="M1 0v21M1 11h20" stroke="#333" /><path d="M1 13C3-3 8-3 10.500 10S18 25 20 11" stroke="#a3262a" strokeWidth="1.500" /></Svg>;
const HourGlass = () => <Svg w={18} h={26}><path d="M1 1h16v3H1zM1 22h16v3H1z" fill="#fff" stroke="#222" /><path d="M3 4v4l4 5-4 5v4h12v-4l-4-5 4-5V4z" fill="#fff" stroke="#222" /><path d="M5 7h8l-4 4zM4 21c1-4 9-4 10 0z" fill="#666" /></Svg>;
const SimuliaLogo = () => (
  <Svg w={104} h={24}>
    <path d="M9 3c5-2 8 0 5 3-2 2-4 3-5 3 6 0 6 3 2 6-3 3-7 4-8 2 0-2 3-4 6-7M21 9c-4-1-6 0-5 2 1 3 3 3 0 6-1 1-3 1-4 0" stroke="#0b2a63" strokeWidth="2" />
    <text x="25" y="19" fill="#0b2a63" fontSize="16" fontWeight="bold" fontStyle="italic" fontFamily="DejaVu Sans, sans-serif">SIMULIA</text>
  </Svg>
);

const Marker = ({ x, y }) => (
  <path d={`M${x} ${y - 5}v10l8-5zM${x} ${y - 2}l5 2-5 2`} stroke="#d9822b" />
);

const Scene = () => (
  <svg width="100%" height="100%" fill="none" aria-hidden="true">
    <rect x="404" y="84" width="715" height="500" fill="#1877dc" stroke="#0d2038" />
    <path d="M404 304h715" stroke="#0d1f3c" strokeWidth="2" />
    <path d="M403.500 402v120" stroke="#c8e86a" strokeWidth="1.500" />
    <text x="404" y="398" fill="#c9f0a8" fontSize="12" fontFamily="Liberation Serif, serif">Y</text>
    {[84, 194, 304, 377].map((y) => <Marker key={y} x={395} y={y} />)}
    {[84, 194].map((y) => <Marker key={y} x={1111} y={y} />)}

    <g>
      <path d="M121 628v-30" stroke="#0ea51c" strokeWidth="5" /><path d="M121 588l6 14h-12z" fill="#12a01c" />
      <path d="M127 628h22" stroke="#a3180f" strokeWidth="5" /><path d="M161 628l-14-6v12z" fill="#a3180f" />
      <circle cx="121" cy="628" r="6.500" fill="#0a12a8" />
      <g fill="#fff" fontSize="12" fontFamily="DejaVu Sans, sans-serif">
        <text x="117" y="632">Z</text><text x="117" y="577">Y</text><text x="170" y="632">X</text>
      </g>
    </g>

    <g>
      <path d="M1438 28c14 2 27 14 29 30h-29z" fill="#0e5a70" stroke="#cfd0f5" strokeWidth="2" />
      <path d="M1438 18v66M1422 84h38" stroke="#cfd0f5" strokeWidth="2" />
      <circle cx="1438" cy="19" r="3" fill="#cfd0f5" /><rect x="1434" y="79" width="8" height="9" fill="#d01414" />
      <g fill="#e3e043" fontSize="9" fontFamily="DejaVu Sans, sans-serif">
        <text x="1435" y="12">Y</text><text x="1473" y="60">X</text><text x="1435" y="60">Z</text>
      </g>
    </g>
  </svg>
);

/* ---------- pieces ---------- */

const Combo = ({ id, value, w, bg, font, spin, flat, label }) => (
  <ComboBox $w={w} $bg={bg} $font={font}>
    {spin && (
      <Spinner>
        <SpinButton aria-label="previous"><Svg w={6} h={4}><path d="M3 0l3 4H0z" fill={spin === 'down' ? '#999' : '#111'} /></Svg></SpinButton>
        <SpinButton aria-label="next"><Svg w={6} h={4}><path d="M3 4l3-4H0z" fill={spin === 'up' ? '#999' : '#111'} /></Svg></SpinButton>
      </Spinner>
    )}
    <select id={id} aria-label={label} defaultValue={value}><option>{value}</option></select>
    <ComboArrow $flat={flat}><Chevron /></ComboArrow>
  </ComboBox>
);

const Tools = ({ items }) => items.map(([name, icon]) => (
  <ToolButton key={name} aria-label={name}>{icon}</ToolButton>
));

// text before, under and after the mnemonic
const menus = [['', 'F', 'ile'], ['', 'M', 'odel'], ['Vie', 'w', 'port'], ['', 'V', 'iew'], ['', 'L', 'oad'], ['', 'B', 'C'],
  ['Predefined Fiel', 'd', ''], ['L', 'o', 'ad Case'], ['Feat', 'u', 're'], ['', 'T', 'ools'], ['Plu', 'g', '-ins'], ['', 'H', 'elp']];

const fileTools = [['New', <NewIcon />], ['Open', <OpenIcon />], ['Save', <SaveIcon />], ['Print', <PrintIcon />], ['Save state', <DbIcon />], ['Load state', <DbIcon up />]];
const selectTools = [['Overlap', <OverlapIcon />], ['Pick cube', <GreyCube />], ['Drag frame', <GreyFrame />], ['Pick points', <GreyDots />], ['Pick shell', <GreyShell />]];
const meshTools = [['Mesh', <MeshCube />], ['Seeds', <SeedCube />], ['Nested', <NestedCube />]];
const viewTools = [['Pan', <MoveIcon />], ['Rotate', <RotateIcon />], ['Magnify', <ZoomIcon />], ['Box zoom', <BoxZoomIcon />], ['Fit', <FitIcon />], ['Cycle views', <UpDownIcon />]];
const axisTools = [
  ['XY view', <AxisIcon v="Y" h="X" />], ['XY back', <AxisIcon flip v="Y" h="X" />], ['XZ view', <AxisDown />], ['ZX view', <AxisIcon v="Z" h="X" />],
  ['YZ view', <AxisIcon v="Y" h="Z" />], ['YZ back', <AxisIcon flip v="Y" h="Z" />], ['Iso view', <IsoIcon />],
  ['View 1', <Digit>1</Digit>], ['View 2', <Digit>2</Digit>], ['View 3', <Digit>3</Digit>], ['View 4', <Digit>4</Digit>], ['Custom view', <IsoIcon custom />],
];
const boolTools = [
  ['Display left', <Disks a="none" b="#f2a93c" />], ['Display right', <Disks a="#f2a93c" b="none" />], ['Display one', <Disk />], ['Replace', <ReplaceIcon />],
  ['Undo', <UndoIcon />], ['Redo', <UndoIcon redo />], ['Instances', <BlocksIcon />], ['Display manager', <ManagerIcon />],
];
const paneTools = [
  ['Maximize', <PanesIcon panes={[[1, 4, 26, 20]]} />], ['Cascade', <PanesIcon panes={[[1, 0, 20, 14], [7, 11, 20, 14]]} />],
  ['Tile rows', <PanesIcon panes={[[1, 1, 26, 11], [1, 15, 26, 11]]} />], ['Tile columns', <PanesIcon panes={[[1, 1, 11, 25], [15, 1, 11, 25]]} />],
  ['Link viewports', <LinkedPane />], ['Viewport manager', <ManagerIcon />],
];

const tree = [
  { indent: 3, box: '-', icon: <ModelsIcon />, text: 'Models (3)', guides: [] },
  { indent: 21, box: '+', text: 'geo-test', selected: true, guides: [7, 25] },
  { indent: 21, box: '+', text: 'geo-test-geo-1', guides: [7, 25] },
  { indent: 21, box: '+', text: 'geo-test-geo-2', guides: [7] },
  { indent: 16, icon: <NoteIcon />, text: 'Annotations', guides: [7] },
  { indent: 3, box: '-', icon: <AnalysisIcon />, text: 'Analysis', guides: [] },
  { indent: 21, box: '-', icon: <JobIcon />, text: 'Jobs (3)', guides: [25] },
  { indent: 52, text: 'geo-test (Completed)', guides: [25, 43] },
  { indent: 52, text: 'geo-test-geo-1 (Completed)', guides: [25, 43] },
  { indent: 52, text: 'geo-test-geo-2 (Running)', guides: [25, 43] },
  { indent: 33, icon: <AdaptIcon />, text: 'Adaptivity Processes', guides: [25] },
  { indent: 33, icon: <CoexecIcon />, text: 'Co-executions', guides: [25] },
  { indent: 33, icon: <OptIcon />, text: 'Optimization Processes', guides: [25] },
];

const log = `Warning: parallelizationMethodExplicit member has been removed from Job objects.
Job geo-test-geo-1: Analysis Input File Processor completed successfully.
Job geo-test-geo-1: Abaqus/Standard completed successfully.
Job geo-test-geo-1 completed successfully.
The model "geo-test-geo-2" has been created.
Warning: parallelizationMethodExplicit member has been removed from Job objects.`;

const GeoField = ({ id, label, lw, value, w }) => (
  <>
    <GeoLabel htmlFor={id} $w={lw}>{label}</GeoLabel>
    <TextInput id={id} $w={w} defaultValue={value} />
    <Spacer $w={6} />
  </>
);

const GeoDialog = () => (
  <Dialog $x={926} $y={232} $w={513} $edge="#9fd2aa" $font={12}>
    <DialogTitle $active>
      <AbaqusMark /><span>geoInitial-odb-import(1024249828-WeChat-QQ)</span>
      <BareButton aria-label="Close"><Cross c="#333" /></BareButton>
    </DialogTitle>
    <GeoBody onSubmit={(e) => e.preventDefault()}>
      <GeoRow $first>
        <GeoField id="name_model" label="name_model" lw={78} value="geo-test" w={148} />
        <GeoField id="name_step" label="name_step" lw={66} value="geo" w={78} />
        <GeoLabel htmlFor="direction" $w={55}>direction</GeoLabel>
        <Combo id="direction" value="Z" w={33} font={12} />
      </GeoRow>
      <Rule />
      <GeoRow>
        <GeoField id="dir_odb" label="dir_initial_odb" lw={84} value="" w={218} />
        <FileButton type="button" aria-label="Browse odb"><OpenIcon s={20} /></FileButton>
        <Spacer $w={6} />
        <GeoField id="name_set" label="name_set" lw={58} value="tuti" w={71} />
      </GeoRow>
      <Rule />
      <GeoRow>
        <GeoField id="dir_sub" label="dir_userSubroutine" lw={113} value="C:/Users/Administrator/Desktop/GEOtest-toWuJun/USDFLD.f" w={358} />
        <FileButton type="button" aria-label="Browse subroutine"><OpenIcon s={20} /></FileButton>
      </GeoRow>
      <Rule />
      <GeoRow>
        <GeoField id="num_cpu" label="num_cpu" lw={55} value="16" w={36} />
        <GeoField id="num_gpu" label="num_gpu" lw={57} value="16" w={36} />
        <GeoField id="num_iteration" label="num_iteration" lw={82} value="2" w={36} />
        <GeoField id="num_save" label="num_save" lw={60} value="2" w={36} />
      </GeoRow>
      <Rule />
      <GeoRow $last>
        <GeoField id="gravity" label="gravity" lw={43} value="0" w={50} />
      </GeoRow>
      <Rule />
      <ButtonRow $side={54}>
        <PushButton type="button">OK</PushButton>
        <PushButton $focus>Apply</PushButton>
        <PushButton type="button">Cancel</PushButton>
      </ButtonRow>
    </GeoBody>
  </Dialog>
);

const SetDialog = () => (
  <Dialog $x={1238} $y={464} $w={453}>
    <DialogTitle><BareButton aria-label="Close"><Cross /></BareButton></DialogTitle>
    <SetBody>
      <ListFrame $h={395}>
        <SetTable>
          <colgroup><col /><col /></colgroup>
          <thead><tr><th>Name</th><th>Type</th></tr></thead>
          <tbody>
            {['cebian', 'dibian', 'tuti'].map((n) => <tr key={n}><td>{n}</td><td>Geometry</td></tr>)}
          </tbody>
        </SetTable>
      </ListFrame>
      <ButtonRow $end $side={4}><PushButton $w={62}>Dismiss</PushButton></ButtonRow>
    </SetBody>
  </Dialog>
);

const LoadManager = () => (
  <Dialog $x={744} $y={632} $w={874}>
    <DialogTitle>
      <AbaqusMark /><span>Load Manager</span>
      <BareButton aria-label="Close"><Cross /></BareButton>
    </DialogTitle>
    <LoadBody>
      <ListFrame $h={340}>
        <LoadTable>
          <thead><tr><th aria-label="Status" /><th>Name</th><th>geo</th></tr></thead>
          <tbody>
            <tr>
              <td><Svg w={13} h={11}><path d="M1 5l4 5 7-9-7 6z" fill="#137a1c" stroke="#137a1c" /></Svg></td>
              <td>geo</td><td>Created</td>
            </tr>
          </tbody>
        </LoadTable>
      </ListFrame>
      <SideButtons>
        <PushButton $w={74}>Edit...</PushButton>
        {['Move Left', 'Move Right', 'Activate', 'Deactivate'].map((t) => <PushButton key={t} $w={74} $off disabled>{t}</PushButton>)}
      </SideButtons>
    </LoadBody>
    <Rule />
    <LoadInfo>
      <dt>Step procedure:</dt><dd>Soils</dd>
      <dt>Load type:</dt><dd>Gravity</dd>
      <dt>Load status:</dt><dd>Created in this step</dd>
    </LoadInfo>
    <Rule />
  </Dialog>
);

const EditLoad = () => (
  <Dialog $x={1316} $y={586} $w={286}>
    <DialogTitle>
      <AbaqusMark /><span>Edit Load</span>
      <BareButton aria-label="Close"><Cross /></BareButton>
    </DialogTitle>
    <EditBody onSubmit={(e) => e.preventDefault()}>
      <Facts>
        <dt>Name:</dt><dd>geo</dd>
        <dt>Type:</dt><dd>Gravity</dd>
        <dt>Step:</dt><dd>geo (Soils)</dd>
        <dt>Region:</dt><dd>(Whole Model) <ArrowCursor c="#2e6bd0" w={14} h={20} /></dd>
      </Facts>
      <Rule />
      <EditField $gap={5}>
        <label htmlFor="dist">Distribution:</label>
        <Combo id="dist" value="Uniform" w={145} />
        <FieldButton type="button" aria-label="Create field">
          <Svg w={24} h={20}><text x="0" y="15" fill="#222" fontSize="14" fontWeight="bold" fontStyle="italic" fontFamily="Liberation Sans, sans-serif">f(x)</text></Svg>
        </FieldButton>
      </EditField>
      <EditField $gap={4}>
        <label htmlFor="c1">Component 1:</label><TextInput id="c1" $w={150} defaultValue="0" />
      </EditField>
      <EditField $gap={4}>
        <label htmlFor="c2">Component 2:</label><TextInput id="c2" $w={150} defaultValue="-9.8" />
      </EditField>
      <EditField $gap={8}>
        <label htmlFor="amp">Amplitude:</label>
        <Combo id="amp" value="(Ramp)" w={145} />
        <FieldButton type="button" aria-label="Create amplitude"><SineIcon /></FieldButton>
      </EditField>
      <Rule />
      <ButtonRow $side={39}>
        <PushButton>OK</PushButton>
        <PushButton type="button">Cancel</PushButton>
      </ButtonRow>
    </EditBody>
  </Dialog>
);

const ScreenRecorder = () => (
  <Recorder>
    <Svg w={10} h={14}><path d="M2 1v12M8 1v12" stroke="#bbb" /></Svg>
    <Svg w={14} h={16}><path d="M4 4a5 5 0 1 0 6 0M7 1v7" stroke="#c4552f" strokeWidth="1.500" /></Svg>
    <Svg w={1} h={14}><path d="M.5 0v14" stroke="#555" /></Svg>
    <span>00:02:29</span>
    <Svg w={3} h={14}><path d="M1.500 0v14" stroke="#4b84c0" strokeWidth="2" strokeDasharray="2 1" /></Svg>
    <Svg w={14} h={14}><path d="M1 4V1h3M10 1h3v3M13 10v3h-3M4 13H1v-3" stroke="#c5cbd0" /><circle cx="7" cy="7" r="3" stroke="#c5cbd0" /></Svg>
    <Svg w={14} h={14}><circle cx="6" cy="5" r="4" stroke="#c5cbd0" /><path d="M8 9l4 4" stroke="#c5cbd0" strokeWidth="1.500" /></Svg>
    <Svg w={14} h={14}><path d="M2 9l7-8 3 3-7 8-4 1zM8 13h5" stroke="#c5cbd0" /></Svg>
    <Svg w={14} h={14}><path d="M1 4h3l1-2h4l1 2h3v8H1z" stroke="#c5cbd0" /><circle cx="7" cy="8" r="2" stroke="#c5cbd0" /></Svg>
    <Svg w={14} h={14}><path d="M1 7l6-6 6 6v6H9V9H5v4H1z" stroke="#c5cbd0" /></Svg>
  </Recorder>
);

const taskIcons = [
  ['Task view', <Svg s={22}><path d="M3 3v3h9V3M3 19v-3h9v3M3 9h9v4H3zM17 3v16" stroke="#222" /><path d="M15 8h4v3h-4z" fill="#222" /></Svg>, false],
  ['Explorer', <Svg s={24}><path d="M1 3h8l2 2h12v16H1z" fill="#f7c94c" /><path d="M1 7h22v3H1z" fill="#fbe08c" /><path d="M5 22v-9h14v9h-4v-5H9v5z" fill="#3f97d8" /></Svg>, true],
  ['Calculator', <Svg s={24}><path d="M3 1h18v22H3z" fill="#6c7d8a" /><path d="M5 3h14v5H5z" fill="#2ba0dd" /><path d="M5 10h4v3H5zM10 10h4v3h-4zM15 10h4v3h-4zM5 14h4v3H5zM10 14h4v3h-4zM5 18h4v3H5zM10 18h4v3h-4z" fill="#e8eef2" /><path d="M15 14h4v7h-4z" fill="#1f5f9a" /></Svg>, false],
  ['Browser', <Svg s={24}><path d="M4 13h15c0-11-14-11-14 0 0 8 10 9 13 4" stroke="#51a629" strokeWidth="4" /><path d="M1 18C4 8 14 0 22 3" stroke="#a0d24a" strokeWidth="2" /></Svg>, true],
  ['Search tool', <Svg s={24}><circle cx="14" cy="9" r="6.500" stroke="#e9811c" strokeWidth="4" /><path d="M9 14l-6 8" stroke="#e9811c" strokeWidth="5" /></Svg>, false],
  ['Monitor', <Svg s={26}><path d="M2 5l17-2 2 15-16 1z" fill="#aab8bf" /><path d="M5 6l13-1 1 11-13 1z" fill="#e2f0f5" /><path d="M6 12h3l1-4 2 6 2-5 1 3h4" stroke="#3d89a8" /><path d="M18 6l5 1v14l-5 2z" fill="#d4dadd" stroke="#98a3a9" /><path d="M6 19l11-1 3 4H9z" fill="#c9cfd3" /></Svg>, true],
  ['Terminal', <Svg s={24}><path d="M1 2h22v20H1z" fill="#0b0b0b" stroke="#666" /></Svg>, true],
  ['Abaqus', <AbaqusMark size={24} />, true],
];

const App = () => {
  return (
    <Desktop>
      <GlobalStyle />
      <TitleBar>
        <AbaqusMark />
        <span>Abaqus/CAE 2024 - Model Database: C:\Users\Administrator\Desktop\GEOtest-toWuJun\GEOtest-toWuJun.cae [Viewport: 1]</span>
        <WindowButtons $gap={34}>
          <BareButton aria-label="Minimize"><Svg s={12}><path d="M1 6h10" stroke="#888" /></Svg></BareButton>
          <BareButton aria-label="Restore"><Svg s={12}><path d="M1 3.500h7v8H1zM3.500 3V.5h7v8H8" stroke="#888" /></Svg></BareButton>
          <BareButton aria-label="Close"><Cross /></BareButton>
        </WindowButtons>
      </TitleBar>
      <MenuBar>
        <DocMark />
        {menus.map(([a, b, c]) => <MenuItem key={a + b + c}>{a}<u>{b}</u>{c}</MenuItem>)}
        <BareButton aria-label="Context help">
          <Svg w={14} h={14}><path d="M1 1v10l2-2 2 4 1-1-1-4h3z" fill="#111" /><Letter x={7} y={11} c="#111" size={11}>?</Letter></Svg>
        </BareButton>
        <WindowButtons $gap={7}>
          <BareButton $bg="#fff" aria-label="Minimize viewport"><Svg s={13}><path d="M3 10h6" stroke="#666" strokeWidth="2" /></Svg></BareButton>
          <BareButton $bg="#fff" aria-label="Restore viewport"><Svg s={13}><path d="M2 6h6v5H2zM5 5V2h6v5H9" stroke="#666" /></Svg></BareButton>
          <BareButton $bg="#fff" aria-label="Close viewport"><Svg s={13}><path d="M3 3l7 8M10 3l-7 8" stroke="#666" strokeWidth="2" /></Svg></BareButton>
        </WindowButtons>
      </MenuBar>

      <Dock>
        <DockColumn>
          <DockRow $spread>
            <DockGroups>
              <Toolbar><Grip /><Tools items={fileTools} /></Toolbar>
              <Toolbar>
                <Grip />
                <ToolButton aria-label="Select"><ArrowCursor /></ToolButton>
                <Combo label="Selection filter" value="All" w={117} bg="#a9c9ee" flat />
                <Tools items={selectTools} />
              </Toolbar>
            </DockGroups>
            <Toolbar><Grip /><Tools items={meshTools} /></Toolbar>
          </DockRow>
          <DockRow>
            <Toolbar><Grip /><Tools items={viewTools} /></Toolbar>
            <Toolbar><Grip /><Tools items={[['Parallel', <LadderIcon />], ['Perspective', <LadderIcon slant />]]} /></Toolbar>
            <Toolbar><Grip /><Tools items={[['Wireframe', <WireCube />], ['Hidden line', <HiddenCube />], ['Shaded', <SolidCube />]]} /></Toolbar>
          </DockRow>
          <DockRow>
            <Toolbar><Grip /><Tools items={axisTools} /></Toolbar>
          </DockRow>
        </DockColumn>
        <WorkDir>
          <Grip />
          <label htmlFor="workdir">Current work directory:</label>
          <Combo id="workdir" value="C:\Users\Administrator\Desktop\GEOtest-toWuJun" w={319} font={12} />
        </WorkDir>
        <Toolbar><Grip /><Tools items={[['Part view', <PartIcon />], ['Manager', <ManagerIcon />]]} /></Toolbar>
      </Dock>

      <Workspace>
        <LeftPanel>
          <TabStrip>
            <Tab $active>Model</Tab>
            <Tab>Results</Tab>
          </TabStrip>
          <TreeTools>
            <ComboBox $w={207}>
              <DbStack />
              <select aria-label="Tree root" defaultValue="Model Database"><option>Model Database</option></select>
              <ComboArrow><Chevron /></ComboArrow>
            </ComboBox>
            <BareButton aria-label="Sort"><SortArrows /></BareButton>
            <BareButton aria-label="Up"><FolderUp /></BareButton>
            <BareButton aria-label="Links"><LinkIcon /></BareButton>
            <BareButton aria-label="Tips"><BulbIcon /></BareButton>
          </TreeTools>
          <Tree>
            {tree.map((n) => (
              <TreeRow key={n.text} $indent={n.indent} $guides={n.guides}>
                {n.box && <Toggle aria-label={`Toggle ${n.text}`}><Box plus={n.box === '+'} /></Toggle>}
                {n.icon}
                <TreeLabel $selected={n.selected}>{n.text}</TreeLabel>
              </TreeRow>
            ))}
          </Tree>
        </LeftPanel>

        <CanvasColumn>
          <ContextBar>
            <ContextField><label htmlFor="module">Module:</label><Combo id="module" value="Load" w={113} spin="both" /></ContextField>
            <ContextField><label htmlFor="model">Model:</label><Combo id="model" value="geo-test" w={127} spin="down" /></ContextField>
            <ContextField><label htmlFor="step">Step:</label><Combo id="step" value="geo" w={99} spin="up" /></ContextField>
          </ContextBar>
          <CanvasRow>
            <Toolbox>
              <ToolSection $row={40} $pad={1}>
                <Tools items={[
                  ['Create load', <LoadIcon arrow />], ['Load manager', <ManagerIcon />],
                  ['Create BC', <LoadIcon hatch />], ['BC manager', <ManagerIcon />],
                  ['Create field', <LoadIcon field />], ['Field manager', <ManagerIcon />],
                  ['Create load case', <LoadIcon arrow hatch />], ['Case manager', <ManagerIcon />],
                ]} />
              </ToolSection>
              <ToolSection $row={35} $pad={3}>
                <Tools items={[['Region tee', <TeeIcon />], ['Split', <SplitIcon />], ['Erase', <EraseIcon />]]} />
              </ToolSection>
              <ToolSection $row={35} $pad={3}>
                <Tools items={[['Partition edge', <PickEdge />], ['Partition face', <PartitionL />], ['Partition cell', <PartitionSolid />], ['Cut', <CutIcon />]]} />
              </ToolSection>
              <ToolSection $row={35} $pad={6} $last>
                <Tools items={[['Datum point', <XyzIcon />], ['Datum axis', <AxisTool />], ['Datum plane', <PlaneTool />], ['Datum csys', <CsysTool />]]} />
              </ToolSection>
            </Toolbox>
            <Viewport><Scene /></Viewport>
          </CanvasRow>
          <PromptArea>
            <ProgressTrack><ProgressBlock /></ProgressTrack>
            <SimuliaLogo />
          </PromptArea>
        </CanvasColumn>
      </Workspace>

      <BottomBar>
        <Toolbar><Grip /><Tools items={boolTools} /></Toolbar>
        <Toolbar>
          <Grip />
          <ToolButton aria-label="Color code"><PaletteIcon /></ToolButton>
          <Combo label="Color mapping" value="Assembly defaults" w={145} font={12} />
          <ToolButton aria-label="Translucency"><BrownCube /></ToolButton>
          <BareButton aria-label="More"><Svg w={12} h={6}><path d="M1 0h8L5 6z" fill="#111" /></Svg></BareButton>
        </Toolbar>
        <Toolbar><Grip /><Tools items={[['Query', <InfoIcon />]]} /></Toolbar>
        <Toolbar><Grip /><Tools items={paneTools} /></Toolbar>
      </BottomBar>

      <MessageArea>
        <SideTabs>
          <BareButton aria-label="Messages"><Svg w={28} h={32}><path d="M4 3h21v26H4z" fill="#e3e3d6" stroke="#444" strokeWidth="1.500" /><path d="M1 29l2-6 6-5 3 3-6 7z" fill="#b79a4e" stroke="#333" /></Svg></BareButton>
          <BareButton aria-label="Command line"><Svg w={31} h={32}><path d="M1 1h29v30H1z" fill="#f7dc72" stroke="#333" strokeWidth="2" /><path d="M6 11l5 5-5 5M13 11l5 5-5 5M20 11l5 5-5 5" stroke="#222" strokeWidth="2.500" /></Svg></BareButton>
        </SideTabs>
        <Log>{log}</Log>
        <ScrollBar><Svg w={10} h={7}><path d="M1 6l4-4 4 4" stroke="#444" strokeWidth="2" /></Svg><ScrollThumb /></ScrollBar>
      </MessageArea>

      <Taskbar>
        <StartButton aria-label="Start"><Svg s={18}><path d="M0 3l7-1v6H0zM8 2l9-1v7H8zM0 9h7v7l-7-1zM8 9h9v8l-9-1z" fill="#0d0d0d" /></Svg></StartButton>
        <SearchBox>
          <Svg w={17} h={20}><circle cx="10" cy="7" r="6" stroke="#222" strokeWidth="1.500" /><path d="M6 12l-5 6" stroke="#222" strokeWidth="1.500" /></Svg>
          <input aria-label="搜索" placeholder="搜索" />
        </SearchBox>
        {taskIcons.map(([name, icon, running]) => (
          <TaskButton key={name} aria-label={name} $running={running} $active={name === 'Abaqus'}>{icon}</TaskButton>
        ))}
      </Taskbar>

      <SetDialog />
      <LoadManager />
      <EditLoad />
      <GeoDialog />
      <ScreenRecorder />
      <ClickRing><HourGlass /></ClickRing>
      <Preview>
        <PreviewTitle><AbaqusMark size={22} /><span>Abaqus/CAE 2024 [Viewport: 1]</span></PreviewTitle>
        <PreviewMenu>
          <DocMark size={20} /><span><u>F</u>ile</span><span><u>M</u>odel</span><span>Vie<u>w</u>port</span><span><u>V</u>iew</span>
        </PreviewMenu>
      </Preview>
      <Stamp>1024249828</Stamp>
    </Desktop>
  )
}

export default App
